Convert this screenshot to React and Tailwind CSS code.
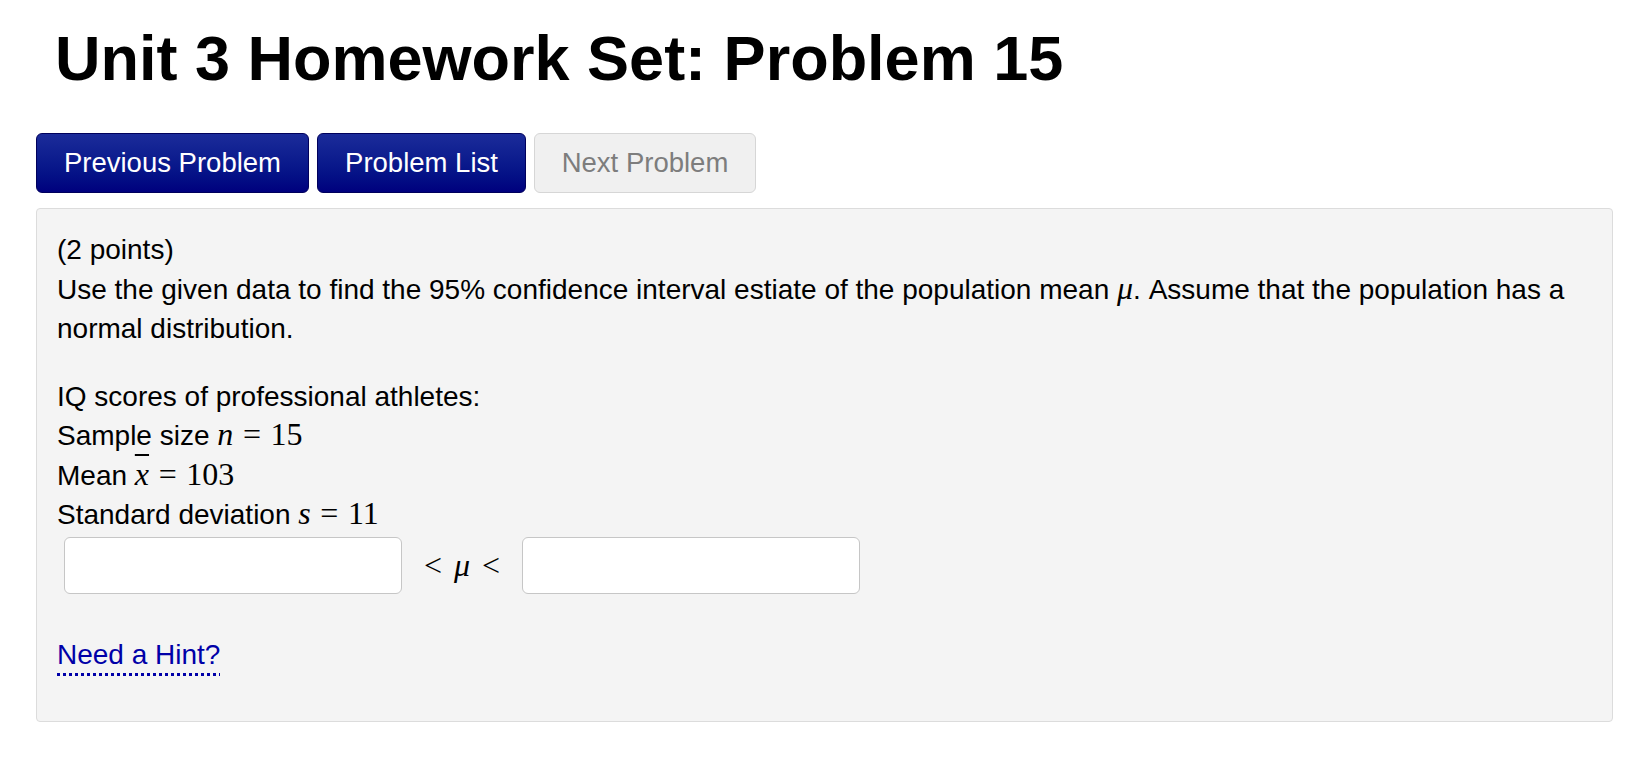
import React from 'react';

const serif = "font-['Liberation_Serif',serif] leading-none";

function NavButton({ children, disabled, w }) {
  if (disabled) {
    return (
      <button className={`h-[60px] ${w} rounded-[6px] border border-[#d6d6d6] bg-[#f0f0f0] text-[#7d7d7d] text-[27.5px]`}>
        {children}
      </button>
    );
  }
  return (
    <button className={`h-[60px] ${w} rounded-[6px] border border-[#00005c] bg-gradient-to-b from-[#1b2b9a] to-[#00007e] text-white text-[27.5px]`}>
      {children}
    </button>
  );
}

function Eq() {
  return <span className="mx-[0.3em]">=</span>;
}

export default function App() {
  return (
    <div className="min-h-screen bg-white font-['Liberation_Sans',Arial,sans-serif] text-black pl-[36px] pr-[39px]">
      <h1 className="font-bold text-[63px] leading-none pt-[27px] pl-[19px] h-[133px]">
        Unit 3 Homework Set: Problem 15
      </h1>
      <div className="flex gap-[8px] mb-[15px]">
        <NavButton w="w-[273px]">Previous Problem</NavButton>
        <NavButton w="w-[209px]">Problem List</NavButton>
        <NavButton w="w-[222px]" disabled>Next Problem</NavButton>
      </div>
      <div className="bg-[#f4f4f4] border border-[#dcdcdc] rounded-[4px] pl-[20px] pr-[22px] pt-[21px] pb-[47px] text-[28px] leading-[39.5px]">
        <div>(2 points)</div>
        <div>
          Use the given data to find the 95% confidence interval estiate of the population mean{' '}
          <span className={`${serif} italic text-[32px]`}>μ</span>. Assume that the population has a normal
          distribution.
        </div>
        <div className="mt-[28px]">IQ scores of professional athletes:</div>
        <div>
          Sample size{' '}
          <span className={`${serif} text-[32px]`}>
            <i>n</i>
            <Eq />
            15
          </span>
        </div>
        <div>
          Mean{' '}
          <span className={`${serif} text-[32px]`}>
            <i className="overline decoration-[1.5px]">x</i>
            <Eq />
            103
          </span>
        </div>
        <div>
          Standard deviation{' '}
          <span className={`${serif} text-[32px]`}>
            <i>s</i>
            <Eq />
            11
          </span>
        </div>
        <div className="flex items-center pl-[7px] mt-[2px]">
          <input className="w-[338px] h-[57px] bg-white border border-[#c6c6c6] rounded-[6px] outline-none" />
          <span className={`${serif} text-[32px] w-[120px] flex justify-center gap-[12px]`}>
            <span>&lt;</span>
            <i>μ</i>
            <span>&lt;</span>
          </span>
          <input className="w-[338px] h-[57px] bg-white border border-[#c6c6c6] rounded-[6px] outline-none" />
        </div>
        <div className="mt-[41px]">
          <a href="#" className="text-[#0000a8] underline decoration-dotted decoration-[3px] underline-offset-[9px]">
            Need a Hint?
          </a>
        </div>
      </div>
    </div>
  );
}
